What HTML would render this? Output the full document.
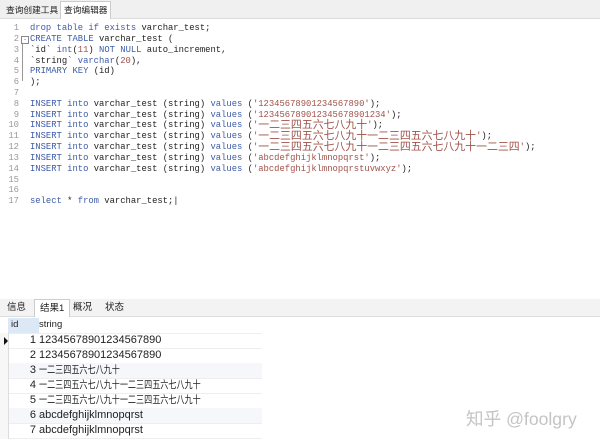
<!DOCTYPE html>
<html><head><meta charset="utf-8"><style>
body{margin:0;width:600px;height:447px;background:#fff;position:relative;overflow:hidden;font-family:"Liberation Sans","Noto Sans CJK SC",sans-serif}
.tabs{position:absolute;left:0;top:0;width:600px;height:18px;background:#f0f0f0;border-bottom:1px solid #dcdcdc}
.tab{position:absolute;top:2px;height:16px;font-size:8.7px;line-height:16px;color:#222;padding:0 3px}
.code{position:absolute;left:0;top:23px;font-family:"Liberation Mono","Noto Sans CJK SC",monospace;font-size:8.85px;line-height:10.82px;white-space:pre}
.ln{position:absolute;left:0;width:19px;text-align:right;color:#999}
.tx{position:absolute;left:30px;color:#222;height:10.8px}
.k{color:#3d5ba8}.s{color:#a0524a}.n{color:#a0524a}
.c{font-size:10.9px;font-family:"Noto Sans CJK SC",sans-serif;line-height:0;position:relative;top:1px}
.fold{position:absolute;left:22px;width:4px;border-left:1px solid #999}
.btabs{position:absolute;left:0;top:299px;width:600px;height:17px;background:#f3f3f3;border-bottom:1px solid #ddd}
.bt{position:absolute;top:0;height:17px;font-size:9.5px;line-height:17px;color:#222;padding:0 5px}
.grid{position:absolute;left:0;top:318px;font-size:11px;color:#222}
.row{position:absolute;left:0;width:262px;height:14.8px;border-bottom:1px solid #eee;line-height:14.8px}
.row .i{position:absolute;left:8px;width:28px;text-align:right}
.row .v{position:absolute;left:39px;font-family:"Liberation Sans","Noto Sans CJK SC",sans-serif;white-space:nowrap}
.cg{display:inline-block;font-size:10.5px;transform:scaleX(.77);transform-origin:left center}
.wm{position:absolute;left:466px;top:406px;font-size:17.6px;color:#c4c4c4;font-family:"Liberation Sans","Noto Sans CJK SC",sans-serif}
</style></head><body>
<div class="tabs">
<div class="tab" style="left:3px">查询创建工具</div>
<div class="tab" style="left:60px;background:#fff;border:1px solid #ccc;border-bottom:none;top:1px;height:17px">查询编辑器</div>
</div>
<div class="code">
<div class="ln" style="top:0">1</div><div class="tx" style="top:0"><span class="k">drop table if exists</span> varchar_test;</div>
<div class="ln" style="top:10.8px">2</div><div class="tx" style="top:10.8px"><span class="k">CREATE TABLE</span> varchar_test (</div>
<div style="position:absolute;left:21px;top:13px;width:6px;height:6px;border:1px solid #888;font-size:6px;line-height:6px;text-align:center;color:#666">-</div>
<div class="fold" style="top:21px;height:37px"></div>
<div class="ln" style="top:21.6px">3</div><div class="tx" style="top:21.6px">`id` <span class="k">int</span>(<span class="n">11</span>) <span class="k">NOT NULL</span> auto_increment,</div>
<div class="ln" style="top:32.5px">4</div><div class="tx" style="top:32.5px">`string` <span class="k">varchar</span>(<span class="n">20</span>),</div>
<div class="ln" style="top:43.3px">5</div><div class="tx" style="top:43.3px"><span class="k">PRIMARY KEY</span> (id)</div>
<div class="ln" style="top:54.1px">6</div><div class="tx" style="top:54.1px">);</div>
<div class="ln" style="top:64.9px">7</div>
<div class="ln" style="top:75.7px">8</div><div class="tx" style="top:75.7px"><span class="k">INSERT into</span> varchar_test (string) <span class="k">values</span> (<span class="s">'12345678901234567890'</span>);</div>
<div class="ln" style="top:86.6px">9</div><div class="tx" style="top:86.6px"><span class="k">INSERT into</span> varchar_test (string) <span class="k">values</span> (<span class="s">'123456789012345678901234'</span>);</div>
<div class="ln" style="top:97.4px">10</div><div class="tx" style="top:97.4px"><span class="k">INSERT into</span> varchar_test (string) <span class="k">values</span> (<span class="s">'<span class="c">一二三四五六七八九十</span>'</span>);</div>
<div class="ln" style="top:108.2px">11</div><div class="tx" style="top:108.2px"><span class="k">INSERT into</span> varchar_test (string) <span class="k">values</span> (<span class="s">'<span class="c">一二三四五六七八九十一二三四五六七八九十</span>'</span>);</div>
<div class="ln" style="top:119px">12</div><div class="tx" style="top:119px"><span class="k">INSERT into</span> varchar_test (string) <span class="k">values</span> (<span class="s">'<span class="c">一二三四五六七八九十一二三四五六七八九十一二三四</span>'</span>);</div>
<div class="ln" style="top:129.8px">13</div><div class="tx" style="top:129.8px"><span class="k">INSERT into</span> varchar_test (string) <span class="k">values</span> (<span class="s">'abcdefghijklmnopqrst'</span>);</div>
<div class="ln" style="top:140.6px">14</div><div class="tx" style="top:140.6px"><span class="k">INSERT into</span> varchar_test (string) <span class="k">values</span> (<span class="s">'abcdefghijklmnopqrstuvwxyz'</span>);</div>
<div class="ln" style="top:151.5px">15</div>
<div class="ln" style="top:162.3px">16</div>
<div class="ln" style="top:173.1px">17</div><div class="tx" style="top:173.1px"><span class="k">select</span> * <span class="k">from</span> varchar_test;|</div>
</div>
<div class="btabs">
<div class="bt" style="left:2px">信息</div>
<div class="bt" style="left:34px;background:#fff;border:1px solid #ccc;border-bottom:none">结果1</div>
<div class="bt" style="left:68px">概况</div>
<div class="bt" style="left:100px">状态</div>
</div>
<div class="grid">
<div class="row" style="top:0;background:#fff;font-size:9.5px"><span style="position:absolute;left:8px;width:28px;background:#dce8f5;padding-left:3px">id</span><span class="v">string</span></div>
<div class="row" style="top:15px"><span class="i">1</span><span class="v">12345678901234567890</span></div>
<div class="row" style="top:30px"><span class="i">2</span><span class="v">12345678901234567890</span></div>
<div class="row" style="top:45px;background:#f5f7fa"><span class="i">3</span><span class="v"><span class="cg">一二三四五六七八九十</span></span></div>
<div class="row" style="top:60px"><span class="i">4</span><span class="v"><span class="cg">一二三四五六七八九十一二三四五六七八九十</span></span></div>
<div class="row" style="top:75px"><span class="i">5</span><span class="v"><span class="cg">一二三四五六七八九十一二三四五六七八九十</span></span></div>
<div class="row" style="top:90px;background:#f5f7fa"><span class="i">6</span><span class="v">abcdefghijklmnopqrst</span></div>
<div class="row" style="top:105px"><span class="i">7</span><span class="v">abcdefghijklmnopqrst</span></div>
<div style="position:absolute;left:0;top:15px;width:8px;height:106px;border-right:1px solid #ddd;background:#f7f7f7"></div>
<div style="position:absolute;left:4px;top:19px;width:0;height:0;border-top:4px solid transparent;border-bottom:4px solid transparent;border-left:4px solid #111"></div>
</div>
<div class="wm">知乎 @foolgry</div>
</body></html>
